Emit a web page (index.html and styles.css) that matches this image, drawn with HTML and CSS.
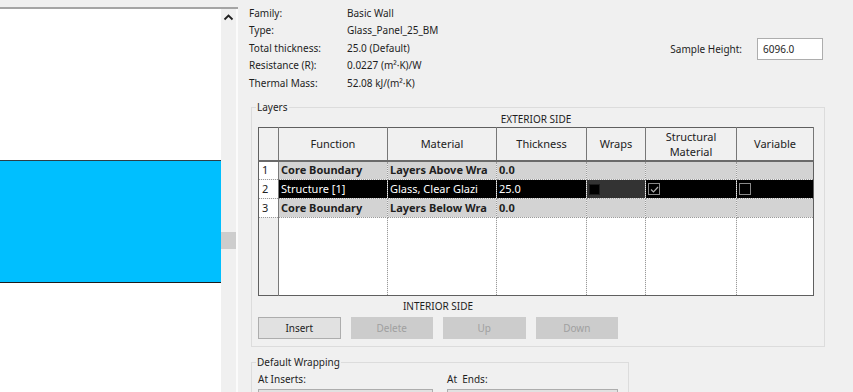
FILE: index.html
```html
<!DOCTYPE html>
<html>
<head>
<meta charset="utf-8">
<link rel="stylesheet" href="styles.css">
</head>
<body>
<div class="app">
  <div class="preview">
    <div class="view">
      <div class="canvas">
        <div class="canvas-top"></div>
        <div class="band"></div>
      </div>
      <div class="vscroll">
        <div class="arrow">
          <svg class="chev" width="11" height="8" viewBox="0 0 11 8"><polyline points="1.5,6.5 5.5,2.5 9.5,6.5" fill="none" stroke="#202020" stroke-width="1.8"/></svg>
        </div>
        <div class="thumb"></div>
      </div>
    </div>
  </div>

  <div class="props">
    <div class="info">
      <div class="info-grid">
        <span class="lbl">Family:</span><span class="val">Basic Wall</span>
        <span class="lbl">Type:</span><span class="val">Glass_Panel_25_BM</span>
        <span class="lbl">Total thickness:</span><span class="val">25.0 (Default)</span>
        <span class="lbl">Resistance (R):</span><span class="val">0.0227 (m²·K)/W</span>
        <span class="lbl">Thermal Mass:</span><span class="val">52.08 kJ/(m²·K)</span>
      </div>
      <div class="sample">
        <span class="sample-lbl">Sample Height:</span>
        <span class="input">6096.0</span>
      </div>
    </div>

    <fieldset class="group layers">
      <legend>Layers</legend>
      <div class="side ext">EXTERIOR SIDE</div>
      <table class="grid">
        <colgroup>
          <col class="c-num"><col class="c-fn"><col class="c-mat"><col class="c-th"><col class="c-wr"><col class="c-st"><col class="c-var">
        </colgroup>
        <thead>
          <tr>
            <th></th><th>Function</th><th>Material</th><th>Thickness</th><th>Wraps</th><th>Structural<br>Material</th><th>Variable</th>
          </tr>
        </thead>
        <tbody>
          <tr class="core">
            <td class="num">1</td><td>Core Boundary</td><td>Layers Above Wra</td><td>0.0</td><td></td><td></td><td></td>
          </tr>
          <tr class="sel">
            <td class="num">2</td><td>Structure [1]</td><td>Glass, Clear Glazi</td><td>25.0</td>
            <td class="wrap-cell"><span class="cb cb-dark"></span></td>
            <td><span class="cb"><svg width="11" height="11" viewBox="0 0 11 11"><path d="M2 5.5 L4.5 8 L9 3" fill="none" stroke="#b0b0b0" stroke-width="1.2"/></svg></span></td>
            <td><span class="cb"></span></td>
          </tr>
          <tr class="core">
            <td class="num">3</td><td>Core Boundary</td><td>Layers Below Wra</td><td>0.0</td><td></td><td></td><td></td>
          </tr>
          <tr class="empty">
            <td class="num"></td><td></td><td></td><td></td><td></td><td></td><td></td>
          </tr>
        </tbody>
      </table>
      <div class="lower">
        <div class="side int">INTERIOR SIDE</div>
        <div class="buttons">
          <span class="btn">Insert</span>
          <span class="btn disabled">Delete</span>
          <span class="btn disabled">Up</span>
          <span class="btn disabled">Down</span>
        </div>
      </div>
    </fieldset>

    <fieldset class="group wrapping">
      <legend>Default Wrapping</legend>
      <div class="wrap-cols">
        <div class="wrap-col">
          <span class="wrap-lbl">At Inserts:</span>
          <span class="select"></span>
        </div>
        <div class="wrap-col">
          <span class="wrap-lbl">At&nbsp; Ends:</span>
          <span class="select"></span>
        </div>
      </div>
    </fieldset>
  </div>
</div>
</body>
</html>
```

FILE: styles.css
```css
* { box-sizing: border-box; }
html, body {
  margin: 0;
  padding: 0;
  background: #f0f0f0;
  width: 853px;
  height: 392px;
  overflow: hidden;
  font-family: "Noto Sans", "Liberation Sans", sans-serif;
  color: #1e1e1e;
}

.app {
  display: flex;
  height: 392px;
}

/* ---------- preview ---------- */
.preview {
  width: 238px;
  padding-top: 7px;
  flex: none;
}
.view {
  display: flex;
  border-top: 2px solid #a5a5a5;
  height: 385px;
}
.canvas {
  width: 221px;
  flex: none;
  background: #ffffff;
}
.canvas-top {
  height: 151px;
}
.band {
  height: 123px;
  background: #00bfff;
  border-top: 1px solid #2c3e48;
  border-bottom: 1px solid #1c1c1c;
}
.vscroll {
  width: 17px;
  flex: none;
  background: #f0f0f0;
  border-right: 2px solid #fbfbfb;
  display: flex;
  flex-direction: column;
}
.arrow {
  width: 15px;
  height: 16px;
  flex: none;
  display: flex;
  align-items: center;
  justify-content: center;
}
.chev {
  display: block;
  flex: none;
}
.thumb {
  margin-top: 207px;
  width: 15px;
  height: 17px;
  background: #cdcdcd;
}

/* ---------- properties ---------- */
.props {
  flex: 1;
  padding-left: 2px;
}
.info {
  display: flex;
  height: 92px;
  padding: 4px 30px 0 9px;
  font-size: 10px;
}
.info-grid {
  display: grid;
  grid-template-columns: 98px auto;
  grid-auto-rows: 17.5px;
  align-items: center;
}
.sample {
  margin-left: auto;
  margin-top: 34px;
  display: flex;
  align-items: center;
  gap: 15px;
  height: 22px;
}
.input {
  width: 66px;
  height: 22px;
  background: #ffffff;
  border: 1px solid #adadad;
  padding: 3px 0 0 5px;
  line-height: 14px;
}

.group {
  margin: 0;
  border: 1px solid #dcdcdc;
  min-width: 0;
}
.group legend {
  font-size: 10px;
  line-height: 13px;
  padding: 0 1px;
  margin-left: -2px;
}
.layers {
  margin: 9px 0 0 11px;
  width: 574px;
  padding: 0 10px 7px 6px;
}
.side {
  font-size: 10px;
  line-height: 10px;
  text-align: center;
}
.side.ext {
  margin: 0 0 3px;
}

.grid {
  width: 555px;
  table-layout: fixed;
  border-collapse: collapse;
  border: 1px solid #5f5f5f;
  font-size: 11px;
}
.c-num { width: 20px; }
.c-fn { width: 109px; }
.c-mat { width: 109px; }
.c-th { width: 90px; }
.c-wr { width: 59px; }
.c-st { width: 91px; }
.c-var { width: 77px; }

.grid th {
  height: 33px;
  background: #f0f0f0;
  font-weight: normal;
  border-right: 1px solid #777777;
  border-bottom: 2px solid #6a6a6a;
  line-height: 15px;
  padding: 0;
  color: #222;
}
.grid td {
  height: 19px;
  padding: 0 0 0 2px;
  border: 1px dotted #9a9a9a;
  white-space: nowrap;
  overflow: hidden;
  line-height: 16px;
}
.grid td.num {
  background: #ffffff;
  color: #222;
  padding-left: 3px;
  font-weight: normal;
  border-right: 1px solid #7a7a7a;
}
.core td {
  background: #d3d3d3;
  font-weight: bold;
}
.sel td {
  background: #000000;
  color: #ffffff;
}
.sel td.wrap-cell {
  background: #333333;
}
.empty td {
  height: 78px;
  background: #ffffff;
}
.empty td.num {
  background: #f0f0f0;
}
.cb {
  display: inline-block;
  width: 12px;
  height: 12px;
  border: 1px solid #8a8a8a;
  vertical-align: middle;
  margin-top: -2px;
}
.cb svg { display: block; margin: -0.5px 0 0 -0.5px; }
.cb-dark {
  background: #000;
  border-color: #1c1c1c;
  width: 11px;
  height: 11px;
}

.lower {
  width: 360px;
}
.side.int {
  margin: 5px 0 6px;
}
.buttons {
  display: flex;
  gap: 10px;
}
.btn {
  width: 83px;
  height: 22px;
  display: flex;
  align-items: center;
  justify-content: center;
  font-size: 10px;
  background: #e1e1e1;
  border: 1px solid #adadad;
}
.btn.disabled {
  background: #cccccc;
  border-color: #cccccc;
  color: #a0a0a0;
}

.wrapping {
  margin: 9px 0 0 11px;
  width: 378px;
  padding: 0 9px 0 6px;
}
.wrap-cols {
  display: flex;
  gap: 14px;
}
.wrap-col {
  display: flex;
  flex-direction: column;
}
.wrap-col:first-child { width: 175px; }
.wrap-col:last-child { width: 171px; }
.wrap-lbl {
  font-size: 10px;
  line-height: 13px;
  margin: 4px 0 3px;
}
.select {
  height: 22px;
  background: #e1e1e1;
  border: 1px solid #adadad;
}
```
